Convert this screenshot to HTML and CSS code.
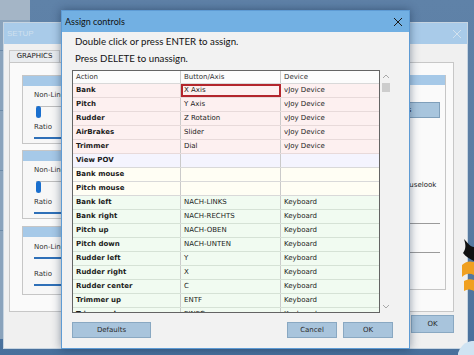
FILE: index.html
```html
<!DOCTYPE html>
<html lang="en">
  <head>
    <meta charset="UTF-8" />
    <title>Assign controls</title>
    <link rel="stylesheet" href="styles.css">
  </head>
  <body>
    <div class="backwin">
      <div class="backwin-top"></div>
      <div class="backwin-row">D</div>
      <div class="backwin-row">R</div>
      <div class="backwin-row">V</div>
      <div class="backwin-row">S</div>
    </div>

    <!-- settings window behind the dialog -->
    <div class="setup">
      <div class="setup-title">
        <span>SETUP</span>
        <svg class="close" width="8" height="8" viewBox="0 0 8 8"><path d="M0 0L8 8M8 0L0 8" /></svg>
      </div>
      <div class="setup-body">
        <div class="tab">GRAPHICS</div>
        <div class="tab-panel">
          <div class="groups">
            <div class="group">
              <div class="group-head"></div>
              <div class="group-body">
                <div class="lbl">Non-Linearity</div>
                <div class="slider"><span class="thumb"></span></div>
                <div class="lbl">Ratio</div>
                <div class="bar"></div>
              </div>
            </div>
            <div class="group">
              <div class="group-head"></div>
              <div class="group-body">
                <div class="lbl">Non-Linearity</div>
                <div class="slider"><span class="thumb"></span></div>
                <div class="lbl">Ratio</div>
                <div class="bar"></div>
              </div>
            </div>
            <div class="group group-flat">
              <div class="group-head"></div>
              <div class="group-body">
                <div class="lbl">Non-Linearity</div>
                <div class="bar"></div>
                <div class="lbl">Ratio</div>
                <div class="bar"></div>
              </div>
            </div>
          </div>
          <div class="side">
            <div class="group-head"></div>
            <div class="side-body">
              <div class="side-btn">Assign controls</div>
              <div class="check"><span class="box"></span>Mouselook</div>
              <div class="track"></div>
              <div class="side-lbl">Rotation</div>
              <div class="track"></div>
            </div>
          </div>
        </div>
        <div class="setup-foot">
          <div class="btn btn-ok">OK</div>
        </div>
      </div>
    </div>

    <svg class="logo" width="16" height="120" viewBox="0 0 16 120">
      <path d="M6 4 C10 8 12 12 16 12 L16 26 C12 24 8 22 5 18 C8 14 8 10 6 4Z" fill="#111" />
      <path d="M4 30 C8 26 12 26 16 27 L16 40 C12 38 8 38 4 42Z" fill="#f0a020" />
      <path d="M6 46 C10 44 13 44 16 45 L16 56 C12 54 9 54 6 56Z" fill="#f0a020" />
      <path d="M0 118 C4 108 10 106 16 106 L16 120 L0 120Z" fill="#cfe3f2" />
    </svg>

    <!-- the dialog -->
    <div class="dialog">
      <div class="dlg-title">
        <span>Assign controls</span>
        <svg class="close" width="8" height="8" viewBox="0 0 8 8"><path d="M0 0L8 8M8 0L0 8" /></svg>
      </div>
      <div class="dlg-body">
        <p class="hint">Double click or press ENTER to assign.</p>
        <p class="hint">Press DELETE to unassign.</p>

        <div class="list">
          <div class="grid">
            <div class="row head"><div>Action</div><div>Button/Axis</div><div>Device</div></div>
            <div class="row axis"><div>Bank</div><div class="sel">X Axis</div><div>vJoy Device</div></div>
            <div class="row axis"><div>Pitch</div><div>Y Axis</div><div>vJoy Device</div></div>
            <div class="row axis"><div>Rudder</div><div>Z Rotation</div><div>vJoy Device</div></div>
            <div class="row axis"><div>AirBrakes</div><div>Slider</div><div>vJoy Device</div></div>
            <div class="row axis"><div>Trimmer</div><div>Dial</div><div>vJoy Device</div></div>
            <div class="row pov"><div>View POV</div><div></div><div></div></div>
            <div class="row mouse"><div>Bank mouse</div><div></div><div></div></div>
            <div class="row mouse"><div>Pitch mouse</div><div></div><div></div></div>
            <div class="row key"><div>Bank left</div><div>NACH-LINKS</div><div>Keyboard</div></div>
            <div class="row key"><div>Bank right</div><div>NACH-RECHTS</div><div>Keyboard</div></div>
            <div class="row key"><div>Pitch up</div><div>NACH-OBEN</div><div>Keyboard</div></div>
            <div class="row key"><div>Pitch down</div><div>NACH-UNTEN</div><div>Keyboard</div></div>
            <div class="row key"><div>Rudder left</div><div>Y</div><div>Keyboard</div></div>
            <div class="row key"><div>Rudder right</div><div>X</div><div>Keyboard</div></div>
            <div class="row key"><div>Rudder center</div><div>C</div><div>Keyboard</div></div>
            <div class="row key"><div>Trimmer up</div><div>ENTF</div><div>Keyboard</div></div>
            <div class="row key"><div>Trimmer down</div><div>EINFG</div><div>Keyboard</div></div>
          </div>
          <div class="scroll">
            <svg width="8" height="5" viewBox="0 0 8 5"><path d="M1 4L4 1L7 4" /></svg>
            <div class="scroll-thumb"></div>
            <svg class="down" width="8" height="5" viewBox="0 0 8 5"><path d="M1 1L4 4L7 1" /></svg>
          </div>
        </div>

        <div class="buttons">
          <div class="btn btn-wide">Defaults</div>
          <div class="btn-pair">
            <div class="btn">Cancel</div>
            <div class="btn">OK</div>
          </div>
        </div>
      </div>
    </div>
  </body>
</html>
```

FILE: styles.css
```css
body {
  margin: 0;
  width: 474px;
  height: 355px;
  overflow: hidden;
  position: relative;
  background: linear-gradient(#5f82a8, #5a7ca2 60%, #48709c);
  font-family: "DejaVu Sans", sans-serif;
  font-size: 7px;
  color: #1b1b1b;
}

/* window far behind, only its edge shows */
.backwin {
  position: absolute;
  left: -70px;
  top: -6px;
  width: 100px;
  height: 345px;
  background: #8aa3bc;
  color: #2a3a4a;
}

.backwin-top {
  height: 26px;
  background: #a4b5c6;
}

.backwin-row {
  height: 29px;
  margin-top: 30px;
  border-top: 1px solid #6c8aa8;
  text-align: right;
  font-size: 8px;
  line-height: 29px;
}

/* setup window */
.setup {
  position: absolute;
  left: 3px;
  top: 22px;
  width: 463px;
  height: 325px;
  background: #f0f0f0;
  border: 1px solid #c6d4e1;
  display: flex;
  flex-direction: column;
}

.setup-title {
  height: 21px;
  background: #a9cbe9;
  color: #cfe0ee;
  font: 8px "Liberation Sans", sans-serif;
  display: flex;
  align-items: center;
  justify-content: space-between;
  padding: 0 6px 0 3px;
}

.setup-title .close path {
  stroke: #d2e1ee;
}

.setup-body {
  flex: 1;
  padding: 6px 13px 0 5px;
  display: flex;
  flex-direction: column;
}

.tab {
  width: 49px;
  height: 11px;
  border: 1px solid #c9c9c9;
  border-bottom: 0;
  background: #e9ecef;
  line-height: 11px;
  text-align: center;
  color: #222;
}

.tab-panel {
  height: 226px;
  border: 1px solid #c7c7c7;
  background: #fafafa;
  padding: 12px 7px 10px 12px;
  display: flex;
}

.groups {
  width: 180px;
  display: flex;
  flex-direction: column;
}

.group {
  height: 70px;
  border: 1px solid #c6c6c6;
  margin-bottom: 6px;
  background: #f7f7f7;
}

.group + .group-flat {
  margin-top: 1px;
}

.group-head {
  height: 10px;
  background: #a6c9e8;
}

.group-body {
  padding: 0 0 0 11px;
}

.lbl {
  height: 10px;
  line-height: 10px;
  margin-top: 4px;
  color: #333;
}

.slider {
  position: relative;
  height: 12px;
  margin-left: 2px;
}

.slider::before {
  content: "";
  display: block;
  margin-top: 6px;
  height: 1px;
  background: #bdbdbd;
}

.thumb {
  position: absolute;
  left: 0;
  top: 0;
  width: 5px;
  height: 12px;
  border-radius: 3px;
  background: #1a6fce;
}

.lbl + .bar {
  margin-top: 5px;
}

.bar {
  height: 2px;
  background: #2f70b8;
}

.group-flat .bar {
  margin-top: 5px;
}

.group-flat .lbl:first-child {
  margin-top: 5px;
}

.group-flat .lbl {
  margin-top: 10px;
}

.side {
  width: 215px;
  margin-left: auto;
  height: 214px;
  border: 1px solid #c6c6c6;
  border-top: 0;
}

.side-body {
  padding: 17px 5px 0 10px;
}

.side-btn {
  height: 14px;
  margin-left: 90px;
  border: 1px solid #7f9fba;
  background: #a8c5dd;
  line-height: 14px;
  text-align: center;
}

.check {
  margin: 62px 0 0 146px;
  display: flex;
  align-items: center;
  gap: 3px;
}

.box {
  width: 8px;
  height: 8px;
  border: 1px solid #777;
  background: #fff;
}

.track {
  height: 1px;
  margin: 33px 0 0 120px;
  background: #9a9a9a;
}

.side-lbl {
  margin: 14px 0 0 139px;
}

.side-lbl + .track {
  margin-top: 6px;
}

.setup-foot {
  display: flex;
  justify-content: flex-end;
  padding-top: 3px;
}

.btn {
  height: 16px;
  border: 1px solid #89a8c2;
  background: #a8c4dc;
  line-height: 16px;
  text-align: center;
  color: #2a2a2a;
  width: 48px;
}

.btn-ok {
  width: 41px;
}

.logo {
  position: absolute;
  left: 458px;
  top: 235px;
}

/* dialog */
.dialog {
  position: absolute;
  left: 61px;
  top: 10px;
  width: 347px;
  height: 337px;
  border: 1px solid #5e9bd4;
  background: #f2f2f2;
  box-shadow: 0 0 9px rgba(10, 30, 60, 0.45);
  display: flex;
  flex-direction: column;
}

.dlg-title {
  height: 21px;
  background: #72b0e3;
  display: flex;
  align-items: center;
  justify-content: space-between;
  padding: 0 7px 0 3px;
  font: 9px Lato, sans-serif;
  color: #111;
}

.close path {
  stroke: #1a1a1a;
  stroke-width: 1;
  fill: none;
}

.dlg-body {
  flex: 1;
  padding: 3px 16px 0 10px;
  display: flex;
  flex-direction: column;
}

.hint {
  margin: 0;
  padding-left: 3px;
  height: 17px;
  line-height: 17px;
  font: 9.7px Lato, sans-serif;
  color: #111;
}

.list {
  margin-top: 1px;
  display: flex;
}

.grid {
  width: 306px;
  height: 241px;
  border: 1px solid #646464;
  background: #fff;
  overflow: hidden;
}

.row {
  display: grid;
  grid-template-columns: 108px 100px 1fr;
  height: 14px;
  box-sizing: border-box;
  border-bottom: 1px solid #d9d9d9;
  font-weight: bold;
}

.row > div {
  padding-left: 3px;
  line-height: 13px;
  border-right: 1px solid #cacaca;
  white-space: nowrap;
  overflow: hidden;
}

.row > div + div {
  font-weight: normal;
}

.row > div:last-child {
  border-right: 0;
}

.head {
  height: 13px;
  font-weight: normal;
  background: #fcfcfc;
}

.head > div {
  line-height: 12px;
  color: #333;
}

.axis {
  background: #fdf0f0;
  border-bottom-color: #e8dada;
}

.pov {
  background: #f4f4fe;
}

.mouse {
  background: #fffef4;
}

.key {
  background: #f1fbf1;
  border-bottom-color: #d6e2d6;
}

.sel {
  outline: 2px solid #b3262d;
  outline-offset: -2px;
}

.scroll {
  width: 12px;
  display: flex;
  flex-direction: column;
  align-items: center;
  padding-top: 4px;
}

.scroll path {
  stroke: #a8a8a8;
  fill: none;
}

.scroll-thumb {
  width: 8px;
  height: 9px;
  margin-top: 4px;
  background: #cdcdcd;
}

.scroll .down {
  margin-top: auto;
  margin-bottom: 4px;
}

.buttons {
  margin-top: 9px;
  display: flex;
  justify-content: space-between;
}

.btn-pair {
  display: flex;
  gap: 6px;
}

.btn-wide {
  width: 77px;
}

.dialog .btn {
  height: 14px;
  line-height: 14px;
}
```
